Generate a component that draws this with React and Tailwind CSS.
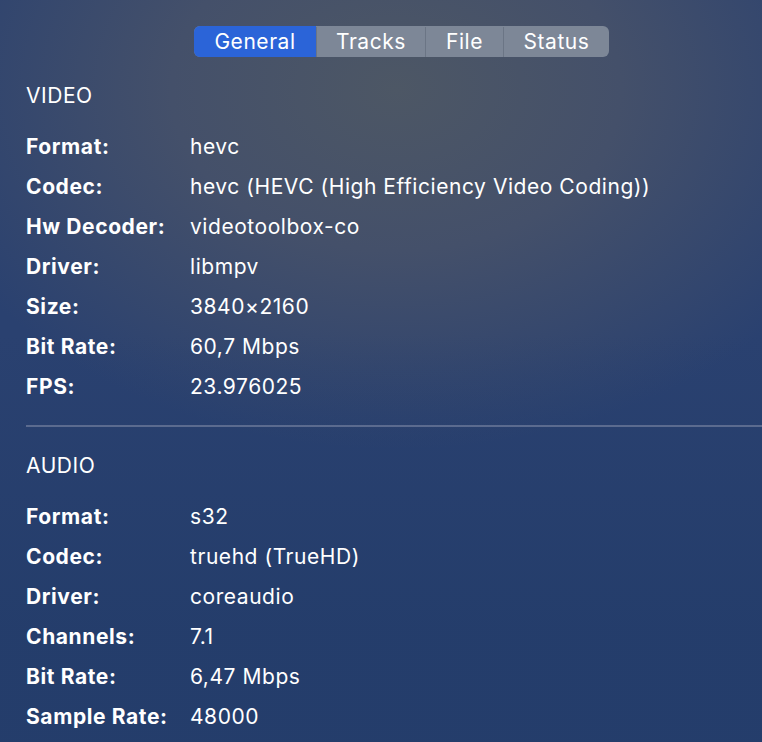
import React from "react";

const video = [
  ["Format:", "hevc"],
  ["Codec:", "hevc (HEVC (High Efficiency Video Coding))"],
  ["Hw Decoder:", "videotoolbox-co"],
  ["Driver:", "libmpv"],
  ["Size:", "3840×2160"],
  ["Bit Rate:", "60,7 Mbps"],
  ["FPS:", "23.976025"],
];
const audio = [
  ["Format:", "s32"],
  ["Codec:", "truehd (TrueHD)"],
  ["Driver:", "coreaudio"],
  ["Channels:", "7.1"],
  ["Bit Rate:", "6,47 Mbps"],
  ["Sample Rate:", "48000"],
];

function Rows({ rows }) {
  return (
    <div className="flex flex-col">
      {rows.map(([k, v]) => (
        <div key={k + v} className="flex h-[40px] items-center">
          <div className="w-[164px] font-bold tracking-[0.6px]">{k}</div>
          <div>{v}</div>
        </div>
      ))}
    </div>
  );
}

export default function App() {
  return (
    <div
      className="relative w-[762px] h-[742px] overflow-hidden text-white text-[21px] tracking-[0.55px] bg-[#2a4170]"
      style={{ fontFamily: "Inter, 'Noto Sans', sans-serif" }}
    >
      <div className="absolute inset-0 bg-[radial-gradient(ellipse_500px_360px_at_52%_12%,#4d5765_0%,#44506a_45%,rgba(40,62,108,0)_100%)]" />
      <div className="absolute inset-0 bg-[linear-gradient(180deg,rgba(60,74,112,0.0)_0%,rgba(36,61,107,0)_45%,rgba(36,61,107,0.95)_85%)]" />
      <div className="relative flex flex-col">
        <div className="flex pt-[26px] pl-[194px]">
          <div className="flex h-[31px] pt-[1px] rounded-[6px] overflow-hidden bg-[#7d8797]">
            <div className="w-[122px] flex items-center justify-center bg-[#2b64d8] -mt-[1px]">General</div>
            <div className="w-[109px] flex items-center justify-center border-l border-[#6b7585]">Tracks</div>
            <div className="w-[78px] flex items-center justify-center border-l border-[#6b7585]">File</div>
            <div className="w-[106px] flex items-center justify-center border-l border-[#6b7585]">Status</div>
          </div>
        </div>
        <div className="pl-[26px]">
          <div className="h-[40px] mt-[19px] flex items-center">VIDEO</div>
          <div className="mt-[11px]">
            <Rows rows={video} />
          </div>
          <div className="mt-[18px] h-[2px] bg-[#5b6b8f]" />
          <div className="h-[40px] mt-[19px] flex items-center">AUDIO</div>
          <div className="mt-[11px]">
            <Rows rows={audio} />
          </div>
        </div>
      </div>
    </div>
  );
}
